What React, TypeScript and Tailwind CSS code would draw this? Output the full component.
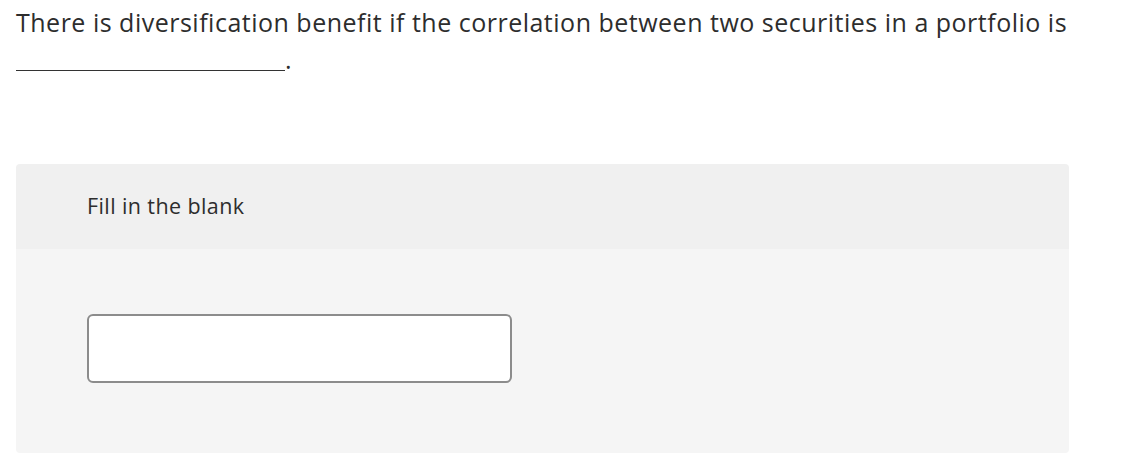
export default function App() {
  return (
    <div className="min-h-screen bg-white px-4 pt-1 font-['Open_Sans','Liberation_Sans',sans-serif] text-[#2d2d2d]">
      <p className="text-[25px] leading-[37px] tracking-[0.5px]">
        There is diversification benefit if the correlation between two securities in a portfolio is{' '}
        <span className="inline-block w-[269px] border-b-[1.5px] border-[#333] align-[-2px]"></span>.
      </p>

      <section className="mt-[86px] w-[1053px] overflow-hidden rounded-[4px]">
        <div className="flex h-[85px] items-center bg-[#f0f0f0] pl-[71px]">
          <h2 className="text-[21.5px] tracking-[0.4px]">Fill in the blank</h2>
        </div>
        <div className="h-[204px] bg-[#f5f5f5] pl-[71px] pt-[65px]">
          <input
            type="text"
            aria-label="Answer"
            className="h-[69px] w-[425px] rounded-[6px] border-2 border-[#8c8c8c] bg-white px-3 text-[20px] outline-none"
          />
        </div>
      </section>
    </div>
  )
}
